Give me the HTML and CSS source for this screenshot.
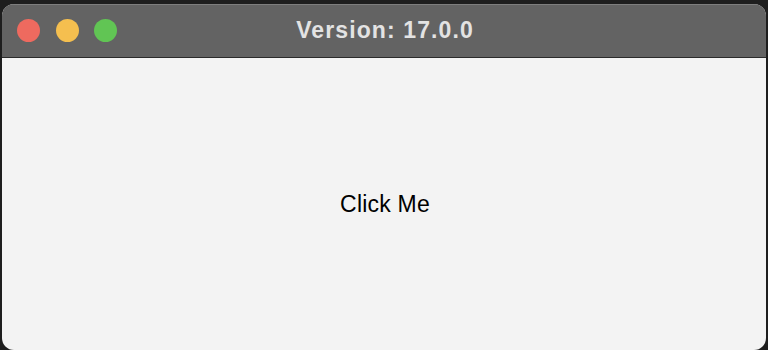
FILE: index.html
```html
<!DOCTYPE html>
<html>
<head>
<meta charset="utf-8">
<link rel="stylesheet" href="styles.css">
</head>
<body>
<div class="window">
  <div class="titlebar">
    <div class="lights">
      <span class="light red"></span>
      <span class="light yellow"></span>
      <span class="light green"></span>
    </div>
    <div class="title">Version: 17.0.0</div>
  </div>
  <div class="content">
    <button class="btn">Click Me</button>
  </div>
</div>
</body>
</html>
```
FILE: styles.css
```css
html, body {
  margin: 0;
  padding: 0;
  background: #1e1e1e;
  width: 768px;
  height: 350px;
  overflow: hidden;
}
.window {
  margin: 4px 0 0 2px;
  width: 764px;
  height: 346px;
  border-radius: 12px;
  overflow: hidden;
  display: flex;
  flex-direction: column;
  background: #f3f3f3;
}
.titlebar {
  position: relative;
  background: #636363;
  border-top: 1px solid #7e7e7e;
  border-bottom: 1px solid #2b2b2b;
  box-sizing: border-box;
  height: 54px;
  display: flex;
  align-items: center;
  justify-content: center;
  flex-shrink: 0;
}
.lights {
  position: absolute;
  left: 15px;
  top: 14px;
  display: flex;
  gap: 15.5px;
}
.light {
  width: 23px;
  height: 23px;
  border-radius: 50%;
  display: block;
}
.red { background: #ee6a5f; }
.yellow { background: #f5bf4f; }
.green { background: #61c554; }
.title {
  font-family: "Liberation Sans", Arial, sans-serif;
  font-weight: bold;
  font-size: 23px;
  letter-spacing: 1.1px;
  color: #e3e3e3;
  margin-top: -2px;
  margin-left: 2px;
}
.content {
  flex: 1;
  display: flex;
  align-items: center;
  justify-content: center;
}
.btn {
  font-family: "Liberation Sans", Arial, sans-serif;
  font-size: 23px;
  letter-spacing: 0.2px;
  color: #000;
  background: none;
  border: none;
  padding: 0;
  margin-left: 2px;
}
```
